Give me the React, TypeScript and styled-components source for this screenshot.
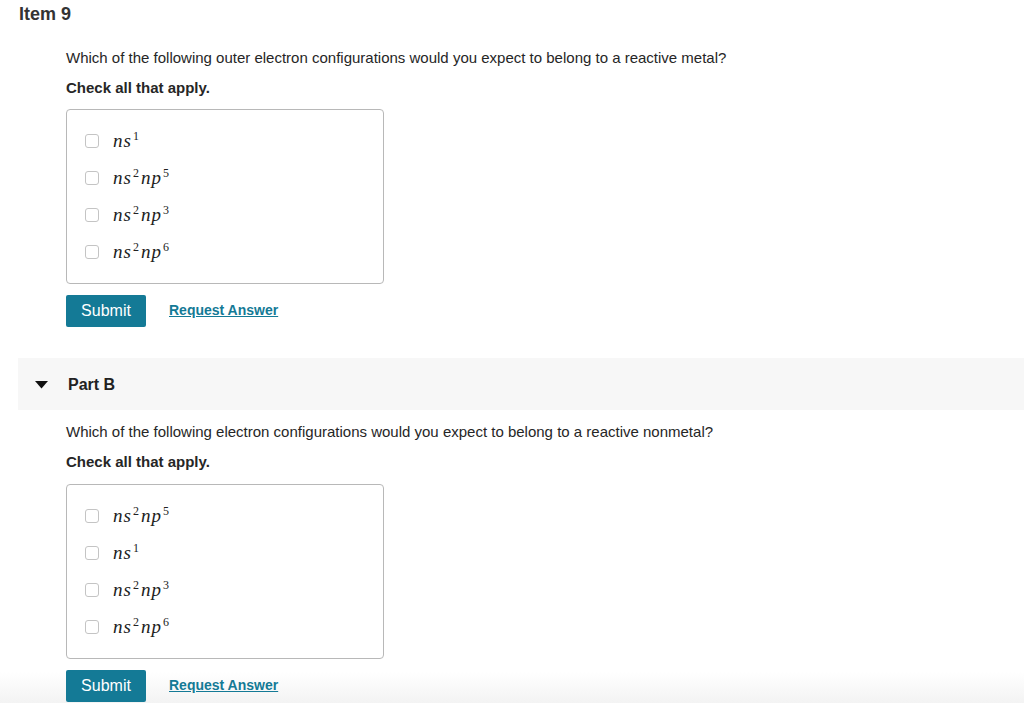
import React from "react";
import styled, { createGlobalStyle } from "styled-components";

const Global = createGlobalStyle`
  html, body { margin: 0; padding: 0; background: #fff; }
  body { font-family: "Liberation Sans", Arial, sans-serif; color: #333; }
`;

const Page = styled.div`
  width: 1024px;
  height: 703px;
  overflow: hidden;
  padding-left: 18px;
  box-sizing: border-box;
  background: linear-gradient(to bottom, #fff 0, #fff 672px, #f3f3f3 703px);
`;

const Title = styled.h1`
  margin: 0;
  padding: 4px 0 0 1px;
  font-size: 18px;
  line-height: 20px;
  font-weight: bold;
  color: #333;
`;

const Part = styled.section<{ $top: number }>`
  padding-left: 48px;
  padding-top: ${(p) => p.$top}px;
`;

const Question = styled.p`
  margin: 0;
  font-size: 15px;
  line-height: 20px;
  color: #262626;
`;

const Instruction = styled.p`
  margin: 10px 0 0;
  font-size: 15px;
  line-height: 20px;
  font-weight: bold;
  color: #262626;
`;

const OptionsBox = styled.div<{ $gap: number }>`
  margin-top: ${(p) => p.$gap}px;
  width: 318px;
  height: 175px;
  box-sizing: border-box;
  border: 1px solid #b8b8b8;
  border-radius: 4px;
  padding: 12px 0 0 18px;
  display: flex;
  flex-direction: column;
`;

const Option = styled.label`
  height: 37px;
  display: flex;
  align-items: center;
  gap: 14px;
`;

const Box = styled.span`
  width: 12px;
  height: 12px;
  border: 1px solid #c4c4c4;
  border-radius: 3px;
  background: #fff;
  flex: none;
`;

const Math = styled.span`
  font-family: "Liberation Serif", "Times New Roman", serif;
  font-style: italic;
  font-size: 19px;
  color: #222;
  letter-spacing: 1px;
  sup {
    font-style: normal;
    font-size: 12px;
    vertical-align: 7px;
    line-height: 0;
    margin-left: 1px;
    margin-right: 1px;
  }
`;

const Actions = styled.div`
  margin-top: 11px;
  display: flex;
  align-items: center;
  gap: 23px;
`;

const SubmitButton = styled.button`
  width: 80px;
  height: 32px;
  border: none;
  border-radius: 2px;
  background: #147a96;
  color: #fff;
  font-family: "Liberation Sans", Arial, sans-serif;
  font-size: 16px;
  padding: 0;
`;

const RequestLink = styled.a`
  font-size: 14px;
  font-weight: bold;
  color: #147a96;
  text-decoration: underline;
  margin-top: -2px;
`;

const PartHeader = styled.div`
  margin-top: 31px;
  height: 52px;
  background: #f7f7f7;
  display: flex;
  align-items: center;
  padding: 2px 0 0 17px;
  box-sizing: border-box;
  gap: 20px;
`;

const PartTitle = styled.span`
  font-size: 16px;
  font-weight: bold;
  color: #222;
`;

type Term = { base: string; exp: string }[];

const MathExpr = ({ terms }: { terms: Term }) => (
  <Math>
    {terms.map((t, i) => (
      <React.Fragment key={i}>
        {t.base}
        <sup>{t.exp}</sup>
      </React.Fragment>
    ))}
  </Math>
);

const ns1: Term = [{ base: "ns", exp: "1" }];
const mk = (n: string): Term => [
  { base: "ns", exp: "2" },
  { base: "np", exp: n },
];

const Options = ({ items, gap }: { items: Term[]; gap: number }) => (
  <OptionsBox $gap={gap}>
    {items.map((t, i) => (
      <Option key={i}>
        <Box />
        <MathExpr terms={t} />
      </Option>
    ))}
  </OptionsBox>
);

const Triangle = () => (
  <svg width="13" height="8" viewBox="0 0 13 8">
    <path d="M0 0 H13 L6.5 7.5 Z" fill="#111" />
  </svg>
);

export default function App() {
  return (
    <Page>
      <Global />
      <Title>Item 9</Title>
      <Part $top={24}>
        <Question>
          Which of the following outer electron configurations would you expect to belong to a reactive metal?
        </Question>
        <Instruction>Check all that apply.</Instruction>
        <Options gap={11} items={[ns1, mk("5"), mk("3"), mk("6")]} />
        <Actions>
          <SubmitButton>Submit</SubmitButton>
          <RequestLink href="#">Request Answer</RequestLink>
        </Actions>
      </Part>
      <PartHeader>
        <Triangle />
        <PartTitle>Part B</PartTitle>
      </PartHeader>
      <Part $top={12}>
        <Question>
          Which of the following electron configurations would you expect to belong to a reactive nonmetal?
        </Question>
        <Instruction>Check all that apply.</Instruction>
        <Options gap={12} items={[mk("5"), ns1, mk("3"), mk("6")]} />
        <Actions>
          <SubmitButton>Submit</SubmitButton>
          <RequestLink href="#">Request Answer</RequestLink>
        </Actions>
      </Part>
    </Page>
  );
}
